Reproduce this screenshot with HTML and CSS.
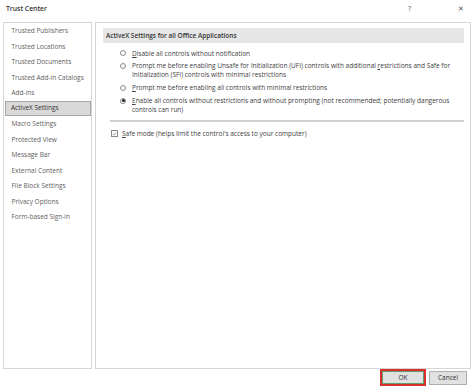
FILE: index.html
```html
<!DOCTYPE html>
<html>
<head>
<meta charset="utf-8">
<link rel="stylesheet" href="styles.css">
</head>
<body>
<div class="window">
  <div class="titlebar">
    <span class="title">Trust Center</span>
    <span class="tb-btns"><span class="help">?</span><span class="close">&#x2715;</span></span>
  </div>
  <div class="main">
    <nav class="nav">
      <div class="item">Trusted Publishers</div>
      <div class="item">Trusted Locations</div>
      <div class="item">Trusted Documents</div>
      <div class="item">Trusted Add-in Catalogs</div>
      <div class="item">Add-ins</div>
      <div class="item selected">ActiveX Settings</div>
      <div class="item">Macro Settings</div>
      <div class="item">Protected View</div>
      <div class="item">Message Bar</div>
      <div class="item">External Content</div>
      <div class="item">File Block Settings</div>
      <div class="item">Privacy Options</div>
      <div class="item">Form-based Sign-in</div>
    </nav>
    <section class="content">
      <div class="section-head">ActiveX Settings for all Office Applications</div>
      <div class="options">
        <div class="opt"><span class="radio"></span><span class="txt"><span class="line"><u>D</u>isable all controls without notification</span></span></div>
        <div class="opt"><span class="radio"></span><span class="txt"><span class="line">Prompt me before enabling Unsafe for Initialization (UFI) controls with additional <u>r</u>estrictions and Safe for</span><span class="line">Initialization (SFI) controls with minimal restrictions</span></span></div>
        <div class="opt"><span class="radio"></span><span class="txt"><span class="line"><u>P</u>rompt me before enabling all controls with minimal restrictions</span></span></div>
        <div class="opt"><span class="radio checked"></span><span class="txt"><span class="line"><u>E</u>nable all controls without restrictions and without prompting (not recommended; potentially dangerous</span><span class="line">controls can run)</span></span></div>
      </div>
      <div class="sep"></div>
      <div class="check-row">
        <span class="checkbox"><svg viewBox="0 0 8 8" width="7" height="7"><path d="M1.4 4.2 L3.2 6 L6.8 1.8" fill="none" stroke="#555" stroke-width="0.9"/></svg></span>
        <span class="txt"><span class="line"><u>S</u>afe mode (helps limit the control's access to your computer)</span></span>
      </div>
    </section>
  </div>
  <div class="footer">
    <span class="ok-ring"><button class="btn ok">OK</button></span>
    <button class="btn cancel">Cancel</button>
  </div>
</div>
</body>
</html>
```

FILE: styles.css
```css
html, body {
  margin: 0;
  padding: 0;
  background: #ffffff;
}
body {
  font-family: "Open Sans", "Noto Sans", sans-serif;
  color: #3c3c3c;
}
.window {
  width: 474px;
  height: 388px;
  display: flex;
  flex-direction: column;
  overflow: hidden;
  background: #fff;
}
.titlebar {
  height: 22px;
  display: flex;
  align-items: center;
  justify-content: space-between;
  padding: 0 10px 0 6px;
  box-sizing: border-box;
}
.title {
  font-size: 6.8px;
  font-weight: 600;
  color: #333;
  margin-top: -6px;
}
.tb-btns {
  display: flex;
  gap: 47px;
  margin-top: -6px;
  color: #555;
  font-size: 7px;
}
.main {
  height: 347px;
  display: flex;
  gap: 3px;
  padding: 0 3px 0 3px;
  box-sizing: border-box;
}
.nav {
  width: 89px;
  border: 1.5px solid #d6d6d6;
  box-sizing: border-box;
  padding: 0 0.5px;
}
.item {
  height: 15.5px;
  line-height: 15.5px;
  font-size: 6.5px;
  color: #5e5e5e;
  padding-left: 7px;
  white-space: nowrap;
}
.item.selected {
  background: #d9d9d9;
  border: 1.5px solid #a6a6a6;
  box-sizing: border-box;
  line-height: 12.5px;
  padding-left: 5.5px;
  color: #333;
}
.content {
  flex: 1;
  border: 1.5px solid #d6d6d6;
  box-sizing: border-box;
  padding: 5px 6px 0 7px;
  font-size: 6.5px;
  color: #404040;
}
.section-head {
  height: 15px;
  line-height: 15px;
  background: #e6e6e6;
  padding-left: 3px;
  font-weight: 600;
  color: #333;
}
.options {
  margin-top: 5.7px;
  padding-left: 17px;
  display: flex;
  flex-direction: column;
  gap: 3.8px;
}
.opt {
  display: flex;
  align-items: flex-start;
  gap: 6px;
  line-height: 9px;
}
.txt {
  display: flex;
  flex-direction: column;
}
.line {
  display: block;
  white-space: nowrap;
}
.radio {
  flex: none;
  width: 6px;
  height: 6px;
  border: 0.8px solid #8a8a8a;
  border-radius: 50%;
  box-sizing: border-box;
  margin-top: 1.5px;
  background: #fff;
  display: flex;
  align-items: center;
  justify-content: center;
}
.radio.checked::after {
  content: "";
  width: 3px;
  height: 3px;
  border-radius: 50%;
  background: #222;
}
.line u {
  text-decoration-thickness: 0.6px;
  text-underline-offset: 1px;
}
.sep {
  height: 1.5px;
  background: #cfcfcf;
  margin: 6px 0 0 7px;
}
.check-row {
  margin-top: 7.5px;
  padding-left: 8px;
  display: flex;
  align-items: center;
  gap: 4px;
  line-height: 9px;
}
.checkbox {
  flex: none;
  width: 7px;
  height: 7px;
  border: 0.8px solid #8a8a8a;
  box-sizing: border-box;
  display: flex;
  align-items: center;
  justify-content: center;
}
.checkbox svg {
  width: 6px;
  height: 6px;
}
.footer {
  flex: 1;
  display: flex;
  justify-content: flex-end;
  align-items: flex-start;
  padding: 0 7px 0 0;
  gap: 3px;
}
.ok-ring {
  display: flex;
  border: 2px solid #d9302e;
  box-sizing: border-box;
  width: 46px;
  height: 17px;
}
.btn {
  font-family: "Open Sans", "Noto Sans", sans-serif;
  font-size: 6.5px;
  color: #333;
  background: #e1e1e1;
  border: 1px solid #adadad;
  padding: 0;
  margin: 0;
  box-sizing: border-box;
}
.btn.ok {
  flex: 1;
  border-color: #5d9b72;
}
.btn.cancel {
  width: 38px;
  height: 14px;
  margin-top: 1.5px;
}
```
